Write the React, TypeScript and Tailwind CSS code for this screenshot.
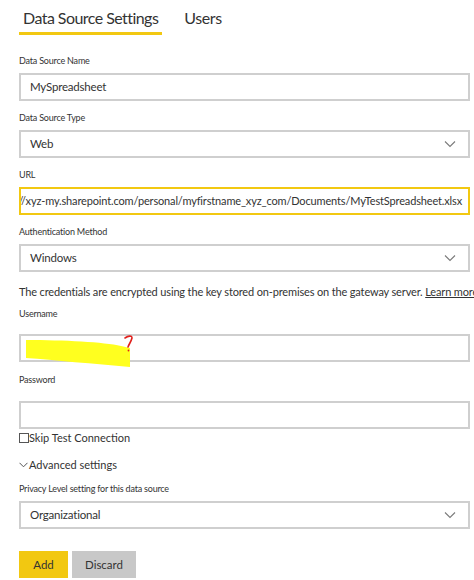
import React from "react";

const font = { fontFamily: "Lato, 'Open Sans', sans-serif" };

function Chevron() {
  return (
    <svg width="12" height="8" viewBox="0 0 12 8" className="shrink-0">
      <path d="M1 1.5 L6 6.5 L11 1.5" fill="none" stroke="#7a7a7a" strokeWidth="1.1" />
    </svg>
  );
}

function Label({ children, gap = "mb-[6px]" }: { children: React.ReactNode; gap?: string }) {
  return (
    <div className={`text-[9px] leading-[12px] tracking-[-0.2px] text-[#333] ${gap}`}>{children}</div>
  );
}

function Box({ children, select }: { children?: React.ReactNode; select?: boolean }) {
  return (
    <div className="h-[28px] w-[451px] flex items-center pl-[9px] pr-[12px] border-2 border-[#cfcfcf] bg-white text-[11.5px] tracking-[-0.2px] text-[#333]">
      <div className="flex-1 min-w-0">{children}</div>
      {select && <Chevron />}
    </div>
  );
}

export default function App() {
  return (
    <div className="w-[474px] h-[580px] overflow-hidden bg-white text-[#333]" style={font}>
      {/* TABS */}
      <div className="flex items-end pl-[19px] pt-[6px] gap-[22px]">
        <div className="pb-[2px] border-b-[3px] border-[#f2c811] px-[4px]">
          <span className="block text-[16px] leading-[24px] tracking-[-0.55px]">Data Source Settings</span>
        </div>
        <div className="pb-[5px]">
          <span className="block text-[16px] leading-[24px] tracking-[-0.4px]">Users</span>
        </div>
      </div>

      <div className="pl-[19px] pt-[20px]">
        <Label>Data Source Name</Label>
        <Box>MySpreadsheet</Box>

        <div className="mt-[11px]">
          <Label>Data Source Type</Label>
          <Box select>Web</Box>
        </div>

        <div className="mt-[11px]">
          <Label>URL</Label>
          <div className="h-[28px] w-[451px] flex items-center justify-end overflow-hidden whitespace-nowrap pr-[6px] border-2 border-[#f2c811] text-[11px] tracking-[-0.15px]">
            https://xyz-my.sharepoint.com/personal/myfirstname_xyz_com/Documents/MyTestSpreadsheet.xlsx
          </div>
        </div>

        <div className="mt-[11px]">
          <Label>Authentication Method</Label>
          <Box select>Windows</Box>
        </div>

        <p className="mt-[12px] whitespace-nowrap text-[11px] leading-[16px] tracking-[-0.15px]">
          The credentials are encrypted using the key stored on-premises on the gateway server.{" "}
          <span className="underline">Learn more</span>
        </p>

        <div className="mt-[8px]">
          <Label gap="mb-[14px]">Username</Label>
          <div className="relative">
            <Box />
            {/* highlighter scribble over the username */}
            <svg
              width="120"
              height="36"
              viewBox="0 0 120 36"
              className="absolute left-[5px] top-0 pointer-events-none"
            >
              <path
                d="M2 6 C40 6, 80 8, 97 12 L106 14 L106 33 C70 30, 30 26, 2 24 Z"
                fill="#ffff1f"
              />
              <path
                d="M101 4 C104 2, 108 1, 108 4 C107 8, 105 10, 104 13"
                fill="none"
                stroke="#e0201c"
                strokeWidth="1.6"
                strokeLinecap="round"
              />
              <circle cx="104.5" cy="16.5" r="0.9" fill="#e0201c" />
            </svg>
          </div>
        </div>

        <div className="mt-[12px]">
          <Label gap="mb-[15px]">Password</Label>
          <Box />
        </div>

        <label className="flex items-center text-[11px] leading-[14px] mt-[2px]">
          <span className="w-[10px] h-[10px] border border-[#555] bg-white inline-block" />
          <span>Skip Test Connection</span>
        </label>

        <div className="flex items-center mt-[13px] text-[11px] leading-[14px]">
          <svg width="9" height="6" viewBox="0 0 9 6" className="mr-[1px]">
            <path d="M0.5 0.8 L4.5 4.8 L8.5 0.8" fill="none" stroke="#555" strokeWidth="1" />
          </svg>
          <span>Advanced settings</span>
        </div>

        <div className="mt-[11px]">
          <Label>Privacy Level setting for this data source</Label>
          <Box select>Organizational</Box>
        </div>

        <div className="flex gap-[4px] mt-[22px]">
          <button className="w-[49px] h-[27px] bg-[#f2c811] text-[11.5px]">Add</button>
          <button className="w-[64px] h-[27px] bg-[#c8c8c8] text-[11.5px]">Discard</button>
        </div>
      </div>
    </div>
  );
}
